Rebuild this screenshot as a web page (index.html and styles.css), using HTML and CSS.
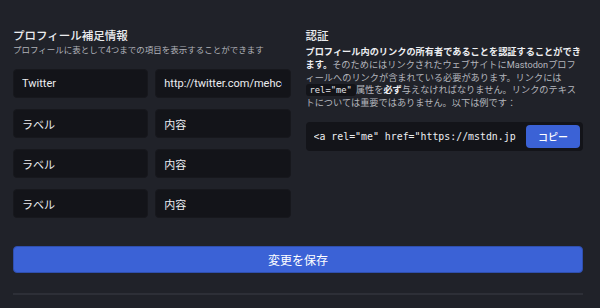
FILE: index.html
```html
<!DOCTYPE html>
<html lang="ja">
<head>
  <meta charset="UTF-8">
  <meta name="viewport" content="width=device-width, initial-scale=1.0">
  <title>プロフィール</title>
  <link rel="stylesheet" href="styles.css">
</head>
<body>
  <form class="settings">
    <div class="columns">
      <!-- Profile metadata fields -->
      <div class="fields-group">
        <h3>プロフィール補足情報</h3>
        <p class="hint">プロフィールに表として4つまでの項目を表示することができます</p>
        <div class="fields">
          <input type="text" value="Twitter">
          <input type="text" value="http://twitter.com/mehcode">
          <input type="text" value="ラベル">
          <input type="text" value="内容">
          <input type="text" value="ラベル">
          <input type="text" value="内容">
          <input type="text" value="ラベル">
          <input type="text" value="内容">
        </div>
      </div>

      <!-- Verification -->
      <div class="fields-group">
        <h3>認証</h3>
        <p class="verify-text"><strong>プロフィール内のリンクの所有者であることを認証することができます。</strong>そのためにはリンクされたウェブサイトにMastodonプロフィールへのリンクが含まれている必要があります。リンクには<code>rel="me"</code>属性を<strong>必ず</strong>与えなければなりません。リンクのテキストについては重要ではありません。以下は例です：</p>
        <div class="copy-box">
          <input type="text" readonly value='&lt;a rel="me" href="https://mstdn.jp/@mehcode"&gt;Mastodon&lt;/a&gt;'>
          <button type="button">コピー</button>
        </div>
      </div>
    </div>

    <button type="submit" class="save-btn">変更を保存</button>
    <hr class="divider">
  </form>
</body>
</html>
```

FILE: styles.css
```css
body {
  margin: 0;
  background: #202229;
  color: #e6e7eb;
  font-family: Roboto, "Noto Sans CJK JP", sans-serif;
}
.settings {
  padding: 28px 17px 0 13px;
}
.columns {
  display: grid;
  grid-template-columns: 1fr 1fr;
  column-gap: 15px;
}
h3 {
  margin: 0;
  font-size: 11.5px;
  line-height: 16px;
  font-weight: 500;
  color: #ebecef;
}
.hint {
  margin: 0 0 13px;
  font-size: 8.5px;
  line-height: 12px;
  color: #b0b2b9;
}
.fields {
  display: grid;
  grid-template-columns: 1fr 1fr;
  column-gap: 7px;
  row-gap: 11px;
}
.fields input,
.copy-box input {
  box-sizing: border-box;
  height: 29px;
  min-width: 0;
  padding: 0 8px;
  background: #131419;
  border: 1px solid #17181d;
  border-radius: 4px;
  color: #eceef1;
  font-family: Roboto, "Noto Sans CJK JP", sans-serif;
  font-size: 11px;
  outline: none;
}
.verify-text {
  margin: 2px 0 12px;
  font-size: 9.2px;
  line-height: 12.75px;
  color: #b4b6bd;
  line-break: loose;
}
.verify-text strong {
  color: #eeeff2;
  font-weight: 700;
}
.verify-text code {
  background: #131419;
  color: #e4e5e9;
  padding: 1px 4px;
  border-radius: 3px;
  font-family: "DejaVu Sans Mono", monospace;
  font-size: 8.8px;
  white-space: nowrap;
}
.copy-box {
  display: flex;
  align-items: center;
  gap: 10px;
  height: 29px;
  padding: 0 3px 0 0;
  background: #131419;
  border-radius: 4px;
}
.copy-box input {
  flex: 1;
  padding-right: 0;
  border: none;
  background: transparent;
  font-family: "DejaVu Sans Mono", monospace;
  font-size: 9.9px;
}
.copy-box button {
  width: 54px;
  height: 23px;
  border: none;
  border-radius: 4px;
  background: #3b62d6;
  color: #fff;
  font-family: Roboto, "Noto Sans CJK JP", sans-serif;
  font-size: 10px;
  font-weight: 500;
  cursor: pointer;
}
.save-btn {
  display: block;
  width: 100%;
  height: 27px;
  margin-top: 28px;
  border: 1px solid #2f4fae;
  border-radius: 4px;
  background: #3b62d6;
  color: #fff;
  font-family: Roboto, "Noto Sans CJK JP", sans-serif;
  font-size: 12px;
  cursor: pointer;
}
.divider {
  margin: 20px 0 0;
  border: none;
  border-top: 2px solid #2d2f37;
}
```
